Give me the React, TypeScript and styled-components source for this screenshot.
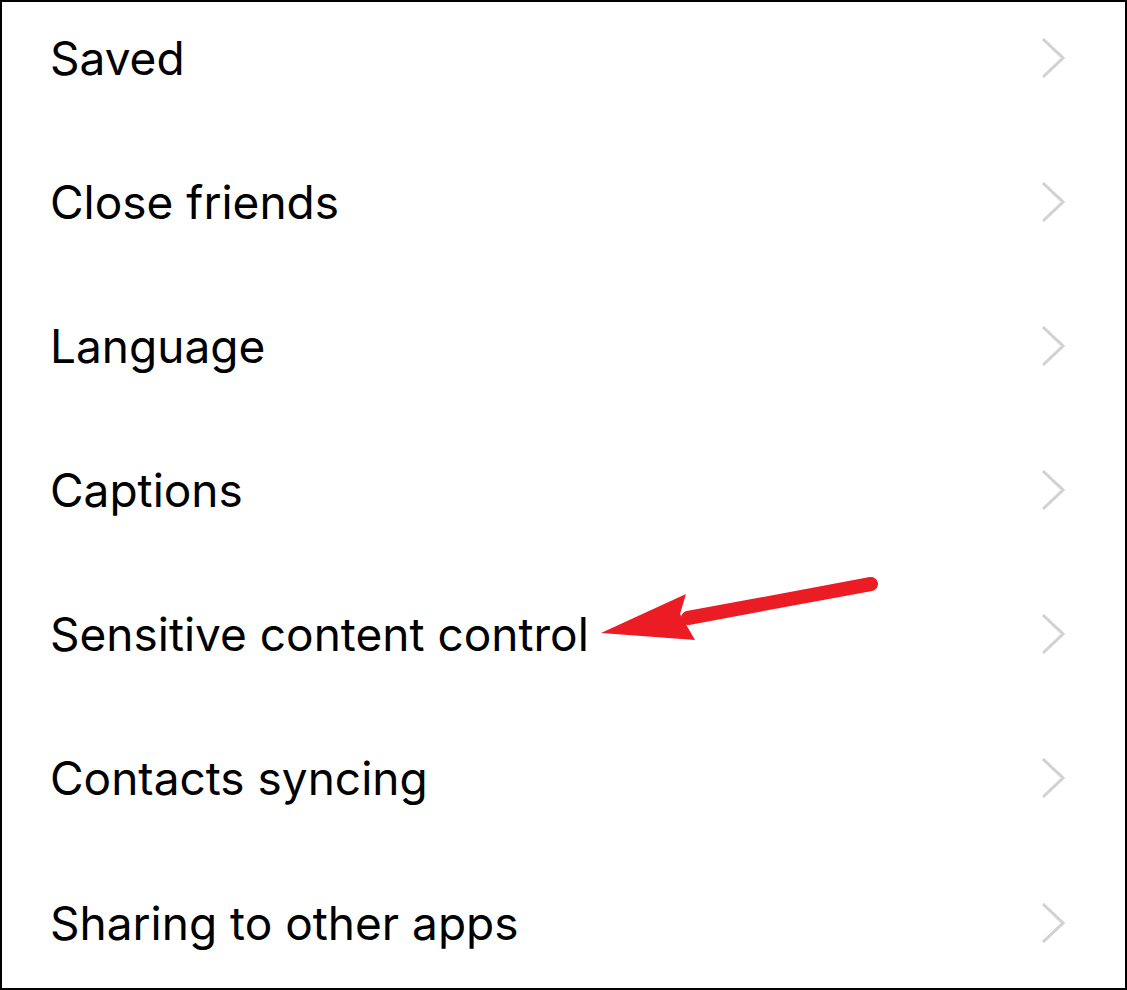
import React from "react";
import styled, { createGlobalStyle } from "styled-components";

const Global = createGlobalStyle`
  html, body { margin: 0; padding: 0; background: #fff; }
  body { font-family: Inter, "Noto Sans", sans-serif; }
`;

const Frame = styled.div`
  position: relative;
  width: 1127px;
  height: 990px;
  box-sizing: border-box;
  border: 2px solid #000;
  overflow: hidden;
  background: #fff;
`;

const List = styled.ul`
  list-style: none;
  margin: -16.5px 0 0 0;
  padding: 0;
`;

const Row = styled.li`
  height: 144.17px;
  display: flex;
  align-items: center;
  justify-content: space-between;
  padding: 0 60px 0 48px;
`;

const Label = styled.span`
  font-family: Inter, "Noto Sans", sans-serif;
  font-size: 46px;
  font-weight: 400;
  color: #000;
`;

const Chevron = () => (
  <svg width="24" height="40" viewBox="0 0 24 40" aria-hidden>
    <path d="M3 2 L22 20 L3 38" fill="none" stroke="#d1d1d6" strokeWidth="3" strokeLinecap="square" />
  </svg>
);

const Overlay = styled.svg`
  position: absolute;
  left: 0;
  top: 0;
  pointer-events: none;
`;

const items = [
  "Saved",
  "Close friends",
  "Language",
  "Captions",
  "Sensitive content control",
  "Contacts syncing",
  "Sharing to other apps",
];

export default function App() {
  return (
    <>
      <Global />
      <Frame>
        <List>
          {items.map((t) => (
            <Row key={t}>
              <Label>{t}</Label>
              <Chevron />
            </Row>
          ))}
        </List>
        <Overlay width="1127" height="990" viewBox="0 0 1127 990">
          <line x1="869" y1="582" x2="686" y2="616" stroke="#ec1c24" strokeWidth="14" strokeLinecap="round" />
          <polygon points="599,631 684,592 678,612 693,638" fill="#ec1c24" />
        </Overlay>
      </Frame>
    </>
  );
}
